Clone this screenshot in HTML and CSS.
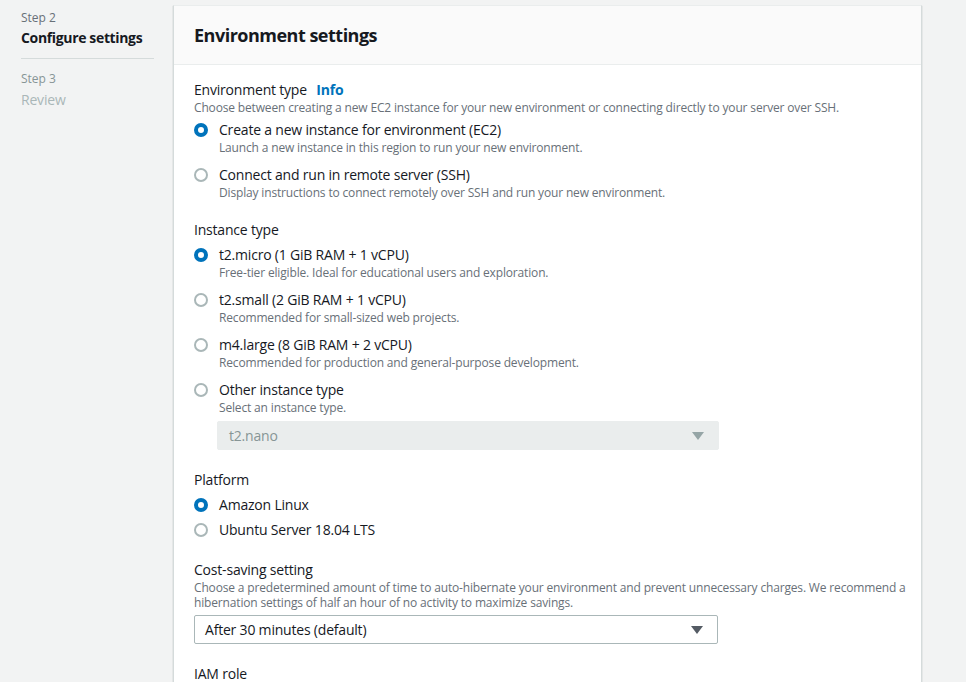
FILE: index.html
```html
<!DOCTYPE html>
<html>
<head>
<meta charset="utf-8">
<link rel="stylesheet" href="styles.css">
</head>
<body>
<div class="page">
  <nav class="steps">
    <div class="step current">
      <div class="step-num">Step 2</div>
      <div class="step-title">Configure settings</div>
    </div>
    <div class="step future">
      <div class="step-num">Step 3</div>
      <div class="step-title">Review</div>
    </div>
  </nav>
  <section class="card">
    <header class="card-head"><h2>Environment settings</h2></header>
    <div class="card-body">
      <div class="field">
        <div class="label">Environment type <a class="info">Info</a></div>
        <div class="desc">Choose between creating a new EC2 instance for your new environment or connecting directly to your server over SSH.</div>
        <div class="radios">
          <div class="radio checked"><span class="dot"></span><div><div class="rl">Create a new instance for environment (EC2)</div><div class="rd">Launch a new instance in this region to run your new environment.</div></div></div>
          <div class="radio"><span class="dot"></span><div><div class="rl">Connect and run in remote server (SSH)</div><div class="rd">Display instructions to connect remotely over SSH and run your new environment.</div></div></div>
        </div>
      </div>
      <div class="field">
        <div class="label">Instance type</div>
        <div class="radios">
          <div class="radio checked"><span class="dot"></span><div><div class="rl">t2.micro (1 GiB RAM + 1 vCPU)</div><div class="rd">Free-tier eligible. Ideal for educational users and exploration.</div></div></div>
          <div class="radio"><span class="dot"></span><div><div class="rl">t2.small (2 GiB RAM + 1 vCPU)</div><div class="rd">Recommended for small-sized web projects.</div></div></div>
          <div class="radio"><span class="dot"></span><div><div class="rl">m4.large (8 GiB RAM + 2 vCPU)</div><div class="rd">Recommended for production and general-purpose development.</div></div></div>
          <div class="radio"><span class="dot"></span><div class="grow"><div class="rl">Other instance type</div><div class="rd">Select an instance type.</div>
            <div class="select disabled"><span>t2.nano</span><span class="caret"></span></div></div></div>
        </div>
      </div>
      <div class="field">
        <div class="label">Platform</div>
        <div class="radios tight">
          <div class="radio checked"><span class="dot"></span><div class="rl">Amazon Linux</div></div>
          <div class="radio"><span class="dot"></span><div class="rl">Ubuntu Server 18.04 LTS</div></div>
        </div>
      </div>
      <div class="field">
        <div class="label">Cost-saving setting</div>
        <div class="desc">Choose a predetermined amount of time to auto-hibernate your environment and prevent unnecessary charges. We recommend a hibernation settings of half an hour of no activity to maximize savings.</div>
        <div class="select wide"><span>After 30 minutes (default)</span><span class="caret"></span></div>
      </div>
      <div class="field">
        <div class="label">IAM role</div>
      </div>
    </div>
  </section>
</div>
</body>
</html>
```
FILE: styles.css
```css
* { box-sizing: border-box; }
html, body { margin: 0; padding: 0; }
body {
  background: #f2f3f3;
  font-family: "Open Sans", "Liberation Sans", Arial, sans-serif;
  color: #16191f;
  width: 966px;
  height: 682px;
  overflow: hidden;
}
.page {
  display: flex;
  align-items: flex-start;
  padding: 5px 0 0 21px;
}
.steps {
  width: 133px;
  margin-right: 19px;
  padding-top: 5px;
}
.step-num { font-size: 12px; line-height: 16px; color: #687078; }
.step-title { font-size: 14px; line-height: 24px; font-weight: 700; letter-spacing: -0.35px; }
.step.current { border-bottom: 1px solid #d5dbdb; padding-bottom: 8px; margin-bottom: 12px; }
.step.future .step-num { color: #879596; }
.step.future .step-title { color: #aab7b8; font-weight: 400; line-height: 26px; letter-spacing: -0.2px; }
.card {
  width: 749px;
  background: #fff;
  border: 1px solid #d5dbdb;
  border-top-color: #eaeded;
  box-shadow: 0 1px 1px rgba(0,28,36,.3);
  height: 720px;
}
.card-head {
  background: #fafafa;
  border-bottom: 1px solid #eaeded;
  height: 59px;
  padding: 17px 20px 0;
}
.card-head h2 { margin: 0; font-size: 18px; line-height: 24px; font-weight: 700; color: #16191f; letter-spacing: -0.5px; }
.card-body { padding: 15px 12px 0 20px; display: flex; flex-direction: column; gap: 20px; }
.label { font-size: 14px; line-height: 20px; color: #16191f; letter-spacing: -0.2px; }
.info { color: #0073bb; font-weight: 700; margin-left: 6px; }
.desc { font-size: 12px; line-height: 15px; color: #687078; letter-spacing: -0.16px; }
.radios { display: flex; flex-direction: column; gap: 10px; margin-top: 5px; }
.radios.tight { gap: 5px; }
.radio { display: flex; align-items: flex-start; }
.dot {
  width: 14px; height: 14px; border-radius: 50%;
  border: 2px solid #aab7b8; background: #fff;
  margin: 3px 11px 0 0; flex: none;
}
.radio.checked .dot { border: 4px solid #0073bb; }
.rl { font-size: 14px; line-height: 20px; letter-spacing: -0.2px; }
.rd { font-size: 12px; line-height: 15px; color: #687078; letter-spacing: -0.16px; }
.grow { flex: 1; }
.select {
  display: flex; align-items: center; justify-content: space-between;
  height: 29px; padding: 0 14px 0 10px;
  font-size: 14px; border-radius: 2px; letter-spacing: -0.2px;
}
.select.disabled {
  width: 502px; margin: 6px 0 0 -2px; height: 29px;
  padding-left: 11px;
  background: #eaeded; border: 1px solid #eaeded; color: #879596;
}
.select.wide {
  width: 524px; margin-top: 5px;
  border: 1px solid #aab7b8; color: #16191f;
}
.caret {
  width: 0; height: 0;
  border-left: 6px solid transparent; border-right: 6px solid transparent;
  border-top: 8px solid #545b64;
}
.select.disabled .caret { border-top-color: #95a5a6; }
```
